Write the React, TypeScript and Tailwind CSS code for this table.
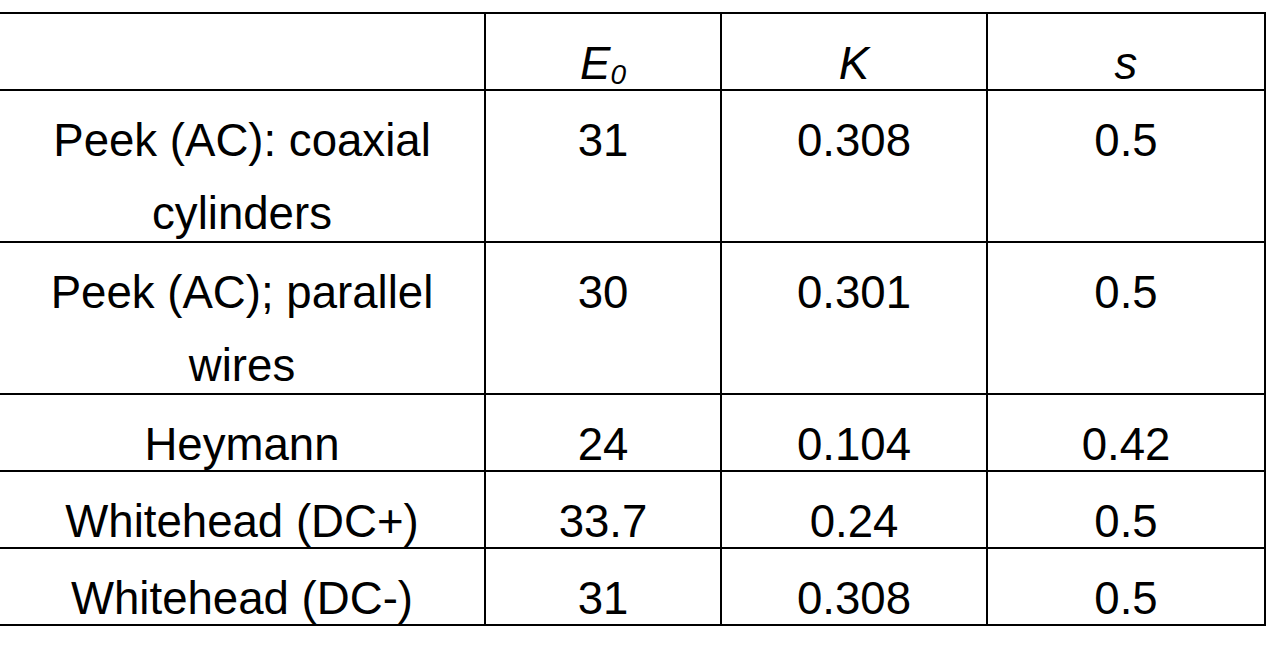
const rows: { name: string[]; e0: string; k: string; s: string }[] = [
  { name: ['Peek (AC): coaxial', 'cylinders'], e0: '31', k: '0.308', s: '0.5' },
  { name: ['Peek (AC); parallel', 'wires'], e0: '30', k: '0.301', s: '0.5' },
  { name: ['Heymann'], e0: '24', k: '0.104', s: '0.42' },
  { name: ['Whitehead (DC+)'], e0: '33.7', k: '0.24', s: '0.5' },
  { name: ['Whitehead (DC-)'], e0: '31', k: '0.308', s: '0.5' },
];

const cell = 'border-r-2 border-b-2 border-black text-center pt-[13px] leading-[73px] whitespace-nowrap';

export default function App() {
  return (
    <div className="w-[1277px] h-[649px] bg-white text-black font-['Liberation_Sans',Arial,sans-serif] text-[45.6px] pt-[12px]">
      <div className="w-[1266px] border-t-2 border-black grid grid-cols-[486px_236px_266px_278px] grid-rows-[77px_152px_152px_77px_77px_77px]">
        <div className={cell} />
        <div className={cell}>
          <span className="italic">
            E<span className="relative top-[5px] text-[28px]">0</span>
          </span>
        </div>
        <div className={cell}>
          <span className="italic">K</span>
        </div>
        <div className={cell}>
          <span className="italic">s</span>
        </div>
        {rows.map((r, i) => (
          <div key={i} className="contents">
            <div className={cell}>
              {r.name.map((line, j) => (
                <div key={j}>{line}</div>
              ))}
            </div>
            <div className={cell}>{r.e0}</div>
            <div className={cell}>{r.k}</div>
            <div className={cell}>{r.s}</div>
          </div>
        ))}
      </div>
    </div>
  );
}
